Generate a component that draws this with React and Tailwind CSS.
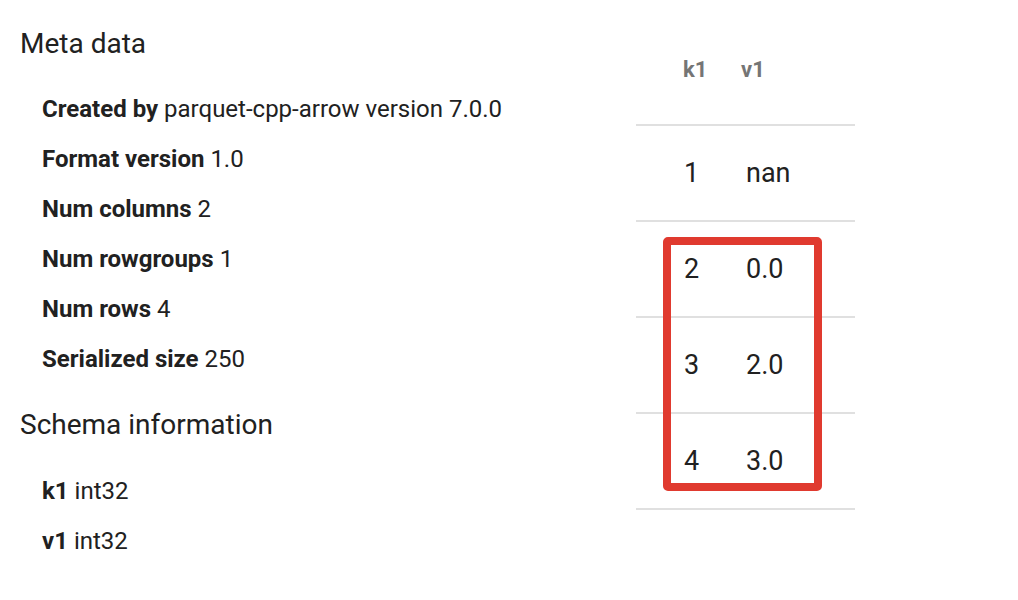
import React from 'react';

const metaItems = [
  ['Created by', 'parquet-cpp-arrow version 7.0.0'],
  ['Format version', '1.0'],
  ['Num columns', '2'],
  ['Num rowgroups', '1'],
  ['Num rows', '4'],
  ['Serialized size', '250'],
];

const schemaItems = [
  ['k1', 'int32'],
  ['v1', 'int32'],
];

const rows = [
  ['1', 'nan'],
  ['2', '0.0'],
  ['3', '2.0'],
  ['4', '3.0'],
];

const InfoLine = ({ label, value }) => (
  <div className="pl-[22px] text-[24px] leading-[50px] text-[#212121]">
    <span className="font-bold">{label}</span> {value}
  </div>
);

const App = () => {
  return (
    <div className="w-[1018px] h-[600px] bg-white flex font-['Roboto',sans-serif] text-[#212121] overflow-hidden">
      {/* Left: file info */}
      <div className="w-[636px] pl-[20px]">
        <h2 className="mt-[28px] text-[28px] leading-[32px] font-normal">Meta data</h2>
        <div className="mt-[24px]">
          {metaItems.map(([label, value]) => (
            <InfoLine key={label} label={label} value={value} />
          ))}
        </div>
        <h2 className="mt-[25px] text-[28px] leading-[32px] font-normal">Schema information</h2>
        <div className="mt-[25px]">
          {schemaItems.map(([label, value]) => (
            <InfoLine key={label} label={label} value={value} />
          ))}
        </div>
      </div>

      {/* Right: data preview */}
      <div className="relative w-[219px] mt-[15px]">
        <div className="flex items-center h-[111px] border-b-2 border-[#e0e0e0] text-[22px] font-bold text-[#757575]">
          <div className="w-[47px]" />
          <div className="w-[58px]">k1</div>
          <div className="flex-1">v1</div>
        </div>
        {rows.map(([k, v]) => (
          <div key={k} className="flex items-center h-[96px] border-b-2 border-[#e0e0e0] text-[27px]">
            <div className="w-[47px]" />
            <div className="w-[58px] pl-[1px]">{k}</div>
            <div className="flex-1 pl-[5px]">{v}</div>
          </div>
        ))}
        {/* highlight annotation */}
        <div className="absolute left-[27px] top-[222px] w-[159px] h-[254px] border-[8px] border-[#e03a2f] rounded-[5px]" />
      </div>
    </div>
  );
};

export default App;
